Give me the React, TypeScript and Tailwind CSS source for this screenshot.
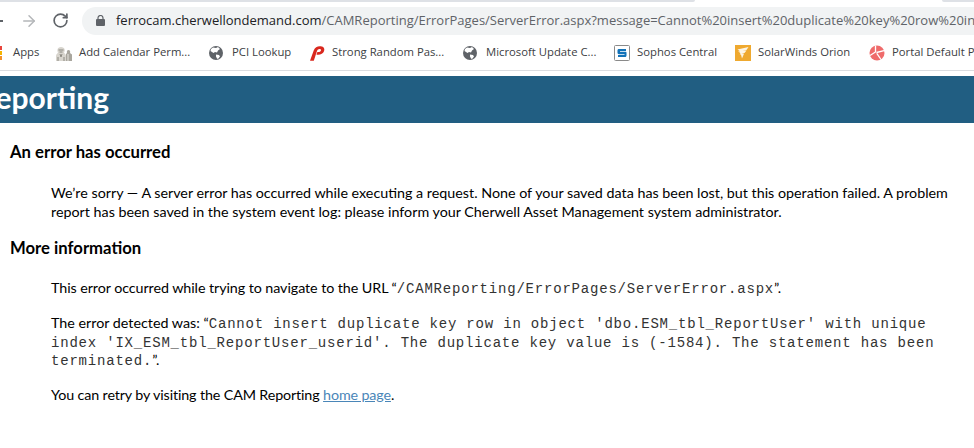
import type { ReactNode } from "react";
import { ArrowRight, RotateCw } from "lucide-react";

const sans = "font-['Lato','Open_Sans',sans-serif]";
const mono = "font-['Liberation_Mono',monospace] text-[14px] leading-none tracking-[0.8px] text-[#333]";

function Globe() {
  return (
    <svg width="16" height="16" viewBox="0 0 16 16" className="shrink-0">
      <circle cx="7" cy="8" r="7" fill="#5f6368" />
      <path d="M4 2.500l3 .5 2-1 2 2-2 1.500-1 2-2-.5-1.500 1L1.500 6 2 4zM7 9.500l3 .5 1 1.500-2 2.500-1-.5-1-2z" fill="#fff" />
    </svg>
  );
}

function CalendarIcon() {
  return (
    <svg width="16" height="16" viewBox="0 0 16 16" className="shrink-0">
      <path d="M0 16V11c0-2 1.500-2.500 2-3.500C1 6 1 2 5 2s4.500 4 3 5.500c.5 1 2 1.500 2 3.500v5z" fill="#d8d5ce" />
      <path d="M2.500 5h5M3.500 7h3M4 9l1 3 1-3M2 12v4M8 12v4" stroke="#85827a" strokeWidth=".9" fill="none" />
      <path d="M10 16V9l1-1c-.5-1.500 0-3 1.500-3s2 1.500 1.500 3l2 1.500V16z" fill="#a9a69e" />
      <path d="M12 9v7" stroke="#e8e6e0" strokeWidth="1" />
    </svg>
  );
}

function RedP() {
  return (
    <svg width="16" height="16" viewBox="0 0 16 16" className="shrink-0">
      <path d="M1 15.800L4.800 5.200C6 2 8.800.8 11.800 1.200c3 .4 4.200 2.600 3.200 5-1 2.700-4.200 4-7.600 3.300l1-2.500c1.700.3 3-.2 3.500-1.300.3-1-.2-1.600-1.300-1.600-1.300 0-2.200.8-2.700 2.100L4.800 15.800z" fill="#d9281e" />
    </svg>
  );
}

function Sophos() {
  return (
    <svg width="16" height="16" viewBox="0 0 16 16" className="shrink-0">
      <rect x=".5" y=".5" width="15" height="15" rx="1" fill="#fff" stroke="#8a8a8a" />
      <path d="M5 4h7v2H6v.8h5.500c.8 0 1 .5 1 1v2.400c0 1-.5 1.800-1.500 1.800H4v-2h6.500v-.8H5c-1 0-1.500-.6-1.500-1.400V5.500C3.500 4.500 4 4 5 4z" fill="#1272b8" />
    </svg>
  );
}

function SolarWinds() {
  return (
    <svg width="16" height="16" viewBox="0 0 16 16" className="shrink-0">
      <rect width="16" height="16" fill="#efa92f" />
      <path d="M2.500 4.500L13.500 2l-2 3-4 .8 4-.2-2 2.500-3 .5 2.500.2-2 4.700-1-3.800-1.500-.6 1-.2-1-1.700-1.500-.7 2-.2z" fill="#fff" opacity=".88" />
    </svg>
  );
}

function PortalIcon() {
  return (
    <svg width="16" height="16" viewBox="0 0 16 16" className="shrink-0">
      <circle cx="8" cy="8" r="7.500" fill="#ef6b6b" />
      <path d="M6.500 .8v6.200L1 10.500M7.500 7.500l7.500-1.800M7.800 8.300L12 14.500" stroke="#fff" strokeWidth="1.300" fill="none" />
    </svg>
  );
}

function Bookmark({ icon, label, width }: { icon: ReactNode; label: string; width: string }) {
  return (
    <div className={`flex shrink-0 items-center gap-[7px] ${width}`}>
      {icon}
      <span className="whitespace-nowrap">{label}</span>
    </div>
  );
}

export default function App() {
  return (
    <div className="h-[448px] w-[974px] overflow-hidden bg-white">
      {/* Browser chrome */}
      <div className="flex h-[2px]">
        <div className="w-[695px] rounded-br-sm bg-[#dee1e6]" />
        <div className="w-[247px]" />
        <div className="flex-1 rounded-bl-sm bg-[#dee1e6]" />
      </div>
      <div className="flex h-[37px] items-center">
        <div className="h-[2px] w-[3px] shrink-0 bg-[#5f6368]" />
        <ArrowRight size={18} strokeWidth={2} className="ml-[17px] shrink-0 text-[#b4b6b9]" />
        <RotateCw size={17} strokeWidth={2.4} className="ml-[14px] shrink-0 text-[#5f6368]" />
        <div className="ml-[13px] flex h-[28px] min-w-0 flex-1 items-center overflow-hidden rounded-l-full bg-[#f1f3f4] pl-[14px]">
          <svg width="9" height="11" viewBox="0 0 9 11" className="shrink-0">
            <path d="M2 4.500V3a2.500 2.500 0 015 0v1.500" stroke="#5f6368" strokeWidth="1.200" fill="none" />
            <rect y="4" width="9" height="7" rx="1" fill="#5f6368" />
          </svg>
          <div className="ml-[11px] whitespace-nowrap font-['Open_Sans',sans-serif] text-[13px] text-[#5f6368]">
            <span className="text-[#202124]">ferrocam.cherwellondemand.com</span>
            /CAMReporting/ErrorPages/ServerError.aspx?message=Cannot%20insert%20duplicate%20key%20row%20in
          </div>
        </div>
      </div>
      <div className="flex h-[31px] items-center overflow-hidden pb-[4px] font-['Open_Sans',sans-serif] text-[11.3px] text-[#3c4043]">
        <div className="mr-[11px] ml-[-1px] grid h-[14px] w-[3px] shrink-0 grid-rows-3 gap-px">
          <span className="bg-[#e8453c]" />
          <span className="bg-[#f4b400]" />
          <span className="bg-[#f4902a]" />
        </div>
        <span className="w-[43px] shrink-0">Apps</span>
        <Bookmark icon={<CalendarIcon />} label="Add Calendar Perm..." width="w-[153px]" />
        <Bookmark icon={<Globe />} label="PCI Lookup" width="w-[100px]" />
        <Bookmark icon={<RedP />} label="Strong Random Pas..." width="w-[154px]" />
        <Bookmark icon={<Globe />} label="Microsoft Update C..." width="w-[151px]" />
        <Bookmark icon={<Sophos />} label="Sophos Central" width="w-[121px]" />
        <Bookmark icon={<SolarWinds />} label="SolarWinds Orion" width="w-[134px]" />
        <Bookmark icon={<PortalIcon />} label="Portal Default Page" width="w-[140px]" />
      </div>
      <div className="h-px bg-[#dadce0]" />
      <div className="h-[5px]" />

      {/* Page header */}
      <div className="relative h-[47px] overflow-hidden bg-[#215e82]">
        <h1 className={`${sans} absolute right-[865px] top-[-1px] whitespace-nowrap text-[30px] font-bold text-white`}>
          CAM Reporting
        </h1>
      </div>

      {/* Page body */}
      <div className={`${sans} px-[10px] pt-[19px] text-[14.3px] leading-[19px] text-black`}>
        <h2 className="text-[16.7px] font-bold leading-[20px]">An error has occurred</h2>
        <p className="mt-[21px] pl-[41px] pr-[10px]">
          We’re sorry — A server error has occurred while executing a request. None of your saved data has been lost,
          but this operation failed. A problem report has been saved in the system event log: please inform your
          Cherwell Asset Management system administrator.
        </p>
        <h2 className="mt-[17px] text-[16.7px] font-bold leading-[20px]">More information</h2>
        <p className="mt-[20px] pl-[41px]">
          <span className="tracking-[-0.07px]">This error occurred while trying to navigate to the URL “</span>
          <span className={mono}>/CAMReporting/ErrorPages/ServerError.aspx</span>”.
        </p>
        <p className="mt-[17px] pl-[41px] pr-[20px] leading-[18.5px]">
          The error detected was: “
          <span className={mono}>
            Cannot insert duplicate key row in object 'dbo.ESM_tbl_ReportUser' with unique index
            'IX_ESM_tbl_ReportUser_userid'. The duplicate key value is (-1584). The statement has been terminated.
          </span>
          ”.
        </p>
        <p className="mt-[15px] pl-[41px] tracking-[-0.13px]">
          You can retry by visiting the CAM Reporting <a className="text-[#4a86b8] underline">home page</a>.
        </p>
      </div>
    </div>
  );
}
